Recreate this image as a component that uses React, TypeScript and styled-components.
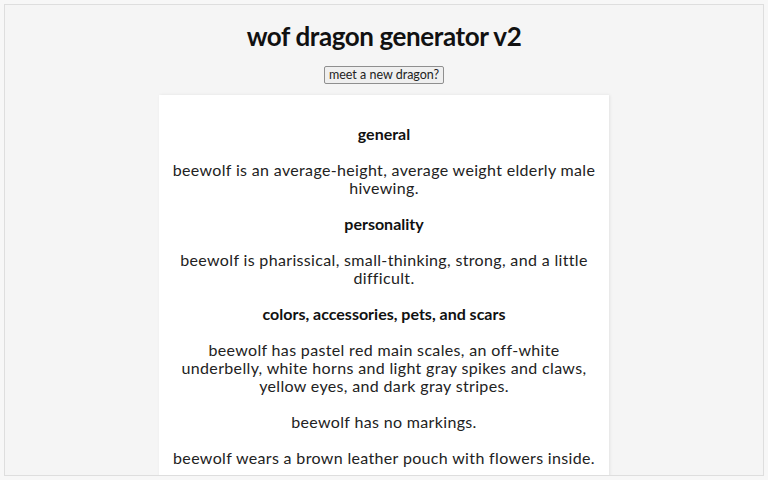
import React from "react";
import styled, { createGlobalStyle } from "styled-components";

const Global = createGlobalStyle`
  html, body {
    margin: 0;
    padding: 0;
    background: #f7f7f7;
  }
  body {
    font-family: Lato, "Noto Sans", sans-serif;
    color: #222;
  }
`;

const Frame = styled.div`
  margin: 4px 4px 0 4px;
  height: 470px;
  border: 1px solid #dedede;
  background: #f5f5f5;
  overflow: hidden;
  display: flex;
  flex-direction: column;
  align-items: center;
`;

const Title = styled.h1`
  margin: 14px 0 0;
  font-size: 26px;
  line-height: 34px;
  font-weight: 700;
  color: #111;
  letter-spacing: -0.4px;
`;

const NewButton = styled.button`
  margin-top: 13px;
  font-family: Lato, "Noto Sans", sans-serif;
  font-size: 12.5px;
  line-height: 14px;
  padding: 1px 4px;
  background: #efefef;
  color: #222;
  border: 1px solid #8f8f8f;
  border-radius: 2px;
`;

const Card = styled.main`
  margin-top: 11px;
  width: 426px;
  padding: 12px 12px;
  background: #fff;
  box-shadow: 1px 0 3px rgba(0, 0, 0, 0.08);
  text-align: center;
  flex-shrink: 0;
`;

const Heading = styled.h3`
  margin: 18px 0;
  font-size: 16px;
  line-height: 18px;
  font-weight: 700;
  color: #111;
`;

const Para = styled.p`
  margin: 18px 0;
  font-size: 16px;
  line-height: 18px;
  font-weight: 400;
  color: #222;
  letter-spacing: 0.34px;
`;

const sections: { title: string; paras: string[] }[] = [
  {
    title: "general",
    paras: [
      "beewolf is an average-height, average weight elderly male hivewing.",
    ],
  },
  {
    title: "personality",
    paras: [
      "beewolf is pharissical, small-thinking, strong, and a little difficult.",
    ],
  },
  {
    title: "colors, accessories, pets, and scars",
    paras: [
      "beewolf has pastel red main scales, an off-white underbelly, white horns and light gray spikes and claws, yellow eyes, and dark gray stripes.",
      "beewolf has no markings.",
      "beewolf wears a brown leather pouch with flowers inside.",
      "they have an old burn scar on their left foreleg.",
    ],
  },
];

export default function App() {
  return (
    <>
      <Global />
      <Frame>
        <Title>wof dragon generator v2</Title>
        <NewButton type="button">meet a new dragon?</NewButton>
        <Card>
          {sections.map((s) => (
            <section key={s.title}>
              <Heading>{s.title}</Heading>
              {s.paras.map((p) => (
                <Para key={p}>{p}</Para>
              ))}
            </section>
          ))}
        </Card>
      </Frame>
    </>
  );
}
